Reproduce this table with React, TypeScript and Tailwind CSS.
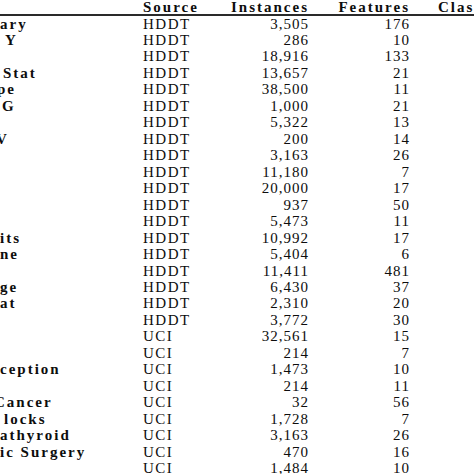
import React from 'react';

type Row = { name: string; nameClass?: string; source: string; instances: string; features: string };

const hddt = (name: string, instances: string, features: string, nameClass = ''): Row => ({ name, nameClass, source: 'HDDT', instances, features });
const uci = (name: string, instances: string, features: string, nameClass = ''): Row => ({ name, nameClass, source: 'UCI', instances, features });

const rows: Row[] = [
  hddt('ary', '3,505', '176'),
  hddt('Y', '286', '10', 'pl-[5px]'),
  hddt('', '18,916', '133'),
  hddt('Stat', '13,657', '21', 'pl-[3px]'),
  hddt('pe', '38,500', '11', '-ml-[3px]'),
  hddt('G', '1,000', '21', 'pl-[2px]'),
  hddt('', '5,322', '13'),
  hddt('V', '200', '14', '-ml-[4px]'),
  hddt('', '3,163', '26'),
  hddt('', '11,180', '7'),
  hddt('', '20,000', '17'),
  hddt('', '937', '50'),
  hddt('', '5,473', '11'),
  hddt('its', '10,992', '17'),
  hddt('ne', '5,404', '6'),
  hddt('', '11,411', '481'),
  hddt('ge', '6,430', '37'),
  hddt('at', '2,310', '20'),
  hddt('', '3,772', '30'),
  uci('', '32,561', '15'),
  uci('', '214', '7'),
  uci('ception', '1,473', '10'),
  uci('', '214', '11'),
  uci('Cancer', '32', '56', '-ml-[6px]'),
  uci('locks', '1,728', '7', 'pl-[4px]'),
  uci('athyroid', '3,163', '26'),
  uci('ic Surgery', '470', '16'),
  uci('', '1,484', '10'),
];

export default function App() {
  return (
    <div className="w-[474px] h-[474px] overflow-hidden bg-white text-[#0d0d0d] text-[15px] font-['Liberation_Serif',serif]">
      {/* Header */}
      <div className="flex h-[14px] leading-[14px] font-bold tracking-[2px] whitespace-nowrap">
        <div className="w-[143px] shrink-0" />
        <div className="w-[70px] shrink-0">Source</div>
        <div className="w-[96px] shrink-0 text-right">Instances</div>
        <div className="w-[101px] shrink-0 text-right">Features</div>
        <div className="pl-[28px]">Classes</div>
      </div>
      <div className="w-full h-[1.5px] bg-[#2a2a2a]" />

      {/* Body */}
      <div>
        {rows.map((r, i) => (
          <div key={i} className="flex h-[16.47px] leading-[16.47px] whitespace-nowrap">
            <div className="w-[143px] shrink-0 overflow-hidden">
              <span className={`block font-bold tracking-[2px] ${r.nameClass}`}>{r.name}</span>
            </div>
            <div className="w-[70px] shrink-0 tracking-[1.5px]">{r.source}</div>
            <div className="w-[96px] shrink-0 text-right tracking-[1px]">{r.instances}</div>
            <div className="w-[101px] shrink-0 text-right tracking-[1px]">{r.features}</div>
            <div className="pl-[28px]" />
          </div>
        ))}
      </div>
    </div>
  );
}
